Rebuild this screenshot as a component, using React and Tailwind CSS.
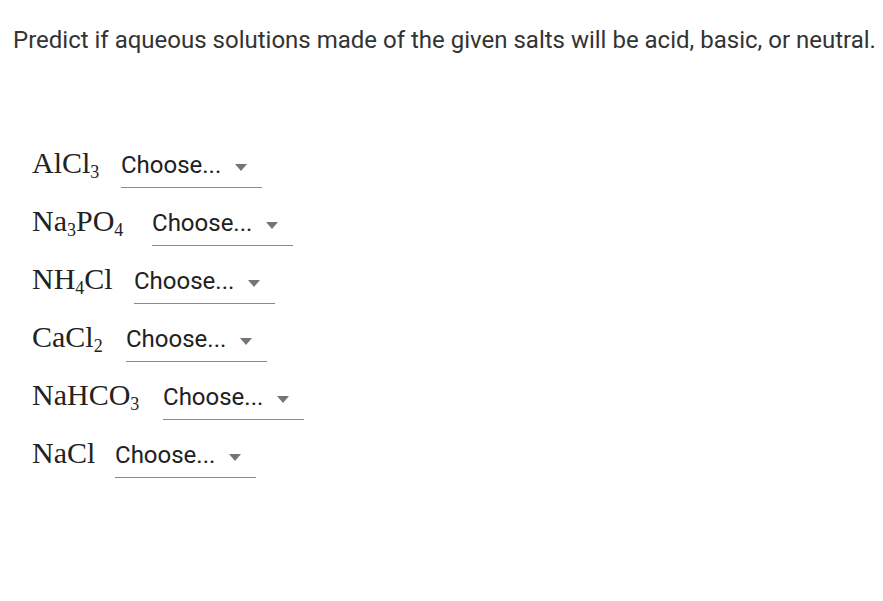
import React from "react";

const rows = [
  { parts: [["Al"], ["Cl"], ["3", true]], ml: "ml-[21.6px]" },
  { parts: [["Na"], ["3", true], ["PO"], ["4", true]], ml: "ml-[28.7px]" },
  { parts: [["NH"], ["4", true], ["Cl"]], ml: "ml-[21.3px]" },
  { parts: [["CaCl"], ["2", true]], ml: "ml-[23.3px]" },
  { parts: [["NaHCO"], ["3", true]], ml: "ml-[23.7px]" },
  { parts: [["NaCl"]], ml: "ml-[19.7px]" },
];

function Select({ ml }) {
  return (
    <div
      className={`${ml} flex w-[141px] items-center border-b border-[#8a8a8a] pb-[8px] pr-[15px] text-[24px] leading-[28px] text-[#212121]`}
      style={{ fontFamily: "Roboto, sans-serif" }}
    >
      <span>Choose...</span>
      <svg className="ml-auto mt-[5px]" width="12" height="7" viewBox="0 0 12 7">
        <path d="M0 0 L12 0 L6 7 Z" fill="#757575" />
      </svg>
    </div>
  );
}

export default function App() {
  return (
    <div className="min-h-[601px] w-[883px] bg-white" style={{ fontFamily: "Roboto, sans-serif" }}>
      <p className="pl-[13px] pt-[26px] text-[24px] leading-[28px] text-[#333]">
        Predict if aqueous solutions made of the given salts will be acid, basic, or neutral.
      </p>
      <div className="mt-[90px] flex flex-col pl-[32px]">
        {rows.map((r, i) => (
          <div key={i} className="flex h-[58px] items-baseline">
            <span
              className="text-[30px] leading-[37px] text-[#222]"
              style={{ fontFamily: '"Liberation Serif", serif' }}
            >
              {r.parts.map(([t, sub], j) =>
                sub ? (
                  <sub key={j} className="text-[18px]">
                    {t}
                  </sub>
                ) : (
                  <span key={j}>{t}</span>
                )
              )}
            </span>
            <Select ml={r.ml} />
          </div>
        ))}
      </div>
    </div>
  );
}
